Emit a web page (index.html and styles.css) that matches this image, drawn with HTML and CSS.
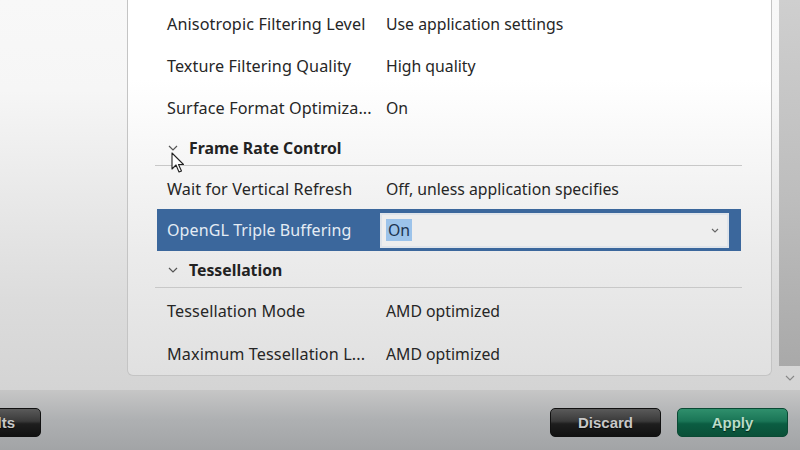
FILE: index.html
```html
<!DOCTYPE html>
<html>
<head>
<meta charset="utf-8">
<link rel="stylesheet" href="styles.css">
</head>
<body>
<div class="screen">
  <div class="main">
    <div class="gutter"></div>
    <div class="panel">
      <div class="row"><div class="label">Anisotropic Filtering Level</div><div class="value">Use application settings</div></div>
      <div class="row"><div class="label">Texture Filtering Quality</div><div class="value">High quality</div></div>
      <div class="row"><div class="label">Surface Format Optimiza...</div><div class="value">On</div></div>
      <div class="header">
        <svg class="chev" width="10" height="6" viewBox="0 0 10 6"><path d="M1 1 L5 5 L9 1" fill="none" stroke="#555" stroke-width="1.2"/></svg>
        <span>Frame Rate Control</span>
      </div>
      <div class="row tall"><div class="label">Wait for Vertical Refresh</div><div class="value">Off, unless application specifies</div></div>
      <div class="row selected">
        <div class="label">OpenGL Triple Buffering</div>
        <div class="dropdown">
          <span class="sel">On</span>
          <svg class="ddchev" width="8" height="5" viewBox="0 0 8 5"><path d="M1 1 L4 4 L7 1" fill="none" stroke="#666" stroke-width="1.1"/></svg>
        </div>
      </div>
      <div class="header">
        <svg class="chev" width="10" height="6" viewBox="0 0 10 6"><path d="M1 1 L5 5 L9 1" fill="none" stroke="#555" stroke-width="1.2"/></svg>
        <span>Tessellation</span>
      </div>
      <div class="row tall"><div class="label">Tessellation Mode</div><div class="value">AMD optimized</div></div>
      <div class="row tall"><div class="label">Maximum Tessellation L...</div><div class="value">AMD optimized</div></div>
    </div>
    <div class="scroll">
      <div class="thumb"></div>
      <div class="arrow">
        <svg width="10" height="6" viewBox="0 0 10 6"><path d="M1 1 L5 5 L9 1" fill="none" stroke="#888" stroke-width="1.1"/></svg>
      </div>
    </div>
  </div>
  <div class="bottombar">
    <div class="btn dark left">Defaults</div>
    <div class="rightbtns">
      <div class="btn dark">Discard</div>
      <div class="btn green">Apply</div>
    </div>
  </div>
  <svg class="cursor" width="14" height="22" viewBox="0 0 14 22">
    <path d="M1 1 L1 17 L5 13 L8 20 L10.5 19 L7.5 12.5 L12.5 12.5 Z" fill="#fff" stroke="#222" stroke-width="1.1" stroke-linejoin="round"/>
  </svg>
</div>
</body>
</html>
```

FILE: styles.css
```css
* { box-sizing: border-box; }
html, body { margin: 0; padding: 0; }
body {
  width: 800px;
  height: 450px;
  overflow: hidden;
  font-family: "Noto Sans", "Open Sans", sans-serif;
  color: #262626;
}
.screen {
  position: relative;
  width: 800px;
  height: 450px;
  display: flex;
  flex-direction: column;
}
.main {
  height: 390px;
  display: flex;
  background: linear-gradient(#f8f8f8 0px, #f6f6f6 90px, #dcdcdc 300px, #d4d4d4 390px);
}
.gutter { width: 127px; flex: none; }
.panel {
  width: 645px;
  height: 376px;
  flex: none;
  border: 1px solid #c4c4c4;
  border-top: none;
  border-radius: 0 0 6px 6px;
  background: linear-gradient(#ffffff 0px, #ffffff 80px, #ececec 250px, #e0e0e0 376px);
  padding: 3px 30px 0 29px;
  display: flex;
  flex-direction: column;
}
.row {
  height: 42px;
  flex: none;
  display: flex;
  align-items: center;
  font-size: 15.8px;
}
.row.tall { height: 43px; padding-top: 2px; }
.label {
  width: 223px;
  padding-left: 10px;
  flex: none;
  white-space: nowrap;
  font-size: 16.2px;
  letter-spacing: 0.1px;
}
.value {
  padding-left: 6px;
  white-space: nowrap;
}
.header {
  height: 37px;
  flex: none;
  display: flex;
  align-items: center;
  border-bottom: 1px solid #c8c8c8;
  margin: 0 -1px 0 -2px;
  padding-left: 13px;
  padding-top: 1px;
  font-weight: bold;
  font-size: 15.8px;
  color: #222;
}
.header .chev { margin-right: 11px; margin-top: 1px; }
.selected {
  background: #3b679c;
  color: #e4ecf4;
}
.selected .label { font-size: 16px; }
.dropdown {
  flex: 1;
  margin-right: 12px;
  height: 35px;
  background: #eeeeee;
  border: 2px solid #dfe4ea;
  display: flex;
  align-items: center;
  padding-left: 4px;
  padding-right: 8px;
}
.sel {
  background: #9cc3ea;
  color: #1c3450;
  padding: 0 2px;
  line-height: 22px;
}
.ddchev { margin-left: auto; }
.scroll {
  margin-left: 7px;
  width: 21px;
  flex: none;
  display: flex;
  flex-direction: column;
}
.thumb {
  height: 366px;
  background: linear-gradient(#cfcfcf, #bdbdbd 200px, #a9a9a9);
}
.arrow {
  flex: 1;
  display: flex;
  align-items: center;
  justify-content: center;
}
.bottombar {
  height: 60px;
  display: flex;
  justify-content: space-between;
  align-items: flex-start;
  padding-top: 18px;
  background: linear-gradient(#c6c6c6, #aeb0b2 30px, #a2a4a6);
}
.btn {
  width: 111px;
  height: 29px;
  border-radius: 5px;
  display: flex;
  align-items: center;
  justify-content: center;
  font-family: "Liberation Sans", Arial, sans-serif;
  font-weight: bold;
  font-size: 15px;
  text-shadow: 0 1px 1px rgba(0,0,0,0.6);
}
.dark {
  background: linear-gradient(#5a5a5a, #3a3a3a 45%, #1e1e1e 55%, #111);
  border: 1px solid #111;
  color: #c8c8c8;
}
.green {
  background: linear-gradient(#2f8f6c, #1a7556 45%, #0b5d42 55%, #0a5038);
  border: 1px solid #0a4a34;
  color: #b9dcc8;
}
.left { margin-left: -70px; }
.rightbtns {
  display: flex;
  gap: 16px;
  margin-right: 12px;
}
.cursor {
  position: absolute;
  left: 171px;
  top: 152px;
}
```
